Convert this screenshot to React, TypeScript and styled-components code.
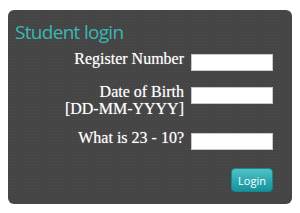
import React from 'react';
import styled, { createGlobalStyle } from 'styled-components';

const GlobalStyle = createGlobalStyle`
  html, body {
    margin: 0;
    padding: 0;
    background: #ffffff;
  }
`;

const Page = styled.div`
  padding: 10px 8px 9px 8px;
`;

const Panel = styled.div`
  box-sizing: border-box;
  width: 284px;
  height: 194px;
  border-radius: 6px;
  background-color: #454545;
  background-image: radial-gradient(rgba(255, 255, 255, 0.035) 1px, transparent 1px);
  background-size: 3px 3px;
  padding: 10px 19px 0 7px;
  display: flex;
  flex-direction: column;
`;

const Title = styled.h2`
  margin: 0 0 6px 0;
  font-family: 'Open Sans', sans-serif;
  font-weight: normal;
  font-size: 19px;
  line-height: 24px;
  letter-spacing: -0.7px;
  color: #3ab7b5;
`;

const Form = styled.div`
  display: grid;
  grid-template-columns: 1fr 82px;
  column-gap: 7px;
  row-gap: 12px;
  align-items: start;
`;

const Label = styled.label`
  font-family: 'Liberation Serif', serif;
  font-size: 16px;
  line-height: 17px;
  color: #ffffff;
  text-align: right;
  text-shadow: 0 0 1px rgba(255, 255, 255, 0.5);
`;

const Input = styled.input`
  box-sizing: border-box;
  width: 82px;
  height: 17px;
  margin: 4px 0 0 0;
  border: 1px solid #c8c8c8;
  background: #ffffff;
  padding: 0 3px;
`;

const Footer = styled.div`
  display: flex;
  justify-content: flex-end;
  margin-top: 18px;
`;

const LoginButton = styled.button`
  width: 42px;
  height: 24px;
  border: 1px solid #17868e;
  border-radius: 4px;
  background: linear-gradient(#52c2c8, #2aa8b0 55%, #16929a);
  color: #ffffff;
  font-family: 'Open Sans', sans-serif;
  font-size: 11px;
  padding: 0;
  cursor: pointer;
`;

const App = () => (
  <>
    <GlobalStyle />
    <Page>
      <Panel>
        <Title>Student login</Title>
        <Form>
          <Label>Register Number</Label>
          <Input type="text" />
          <Label>
            Date of Birth
            <br />
            [DD-MM-YYYY]
          </Label>
          <Input type="text" />
          <Label>What is 23 - 10?</Label>
          <Input type="text" />
        </Form>
        <Footer>
          <LoginButton>Login</LoginButton>
        </Footer>
      </Panel>
    </Page>
  </>
);

export default App;
